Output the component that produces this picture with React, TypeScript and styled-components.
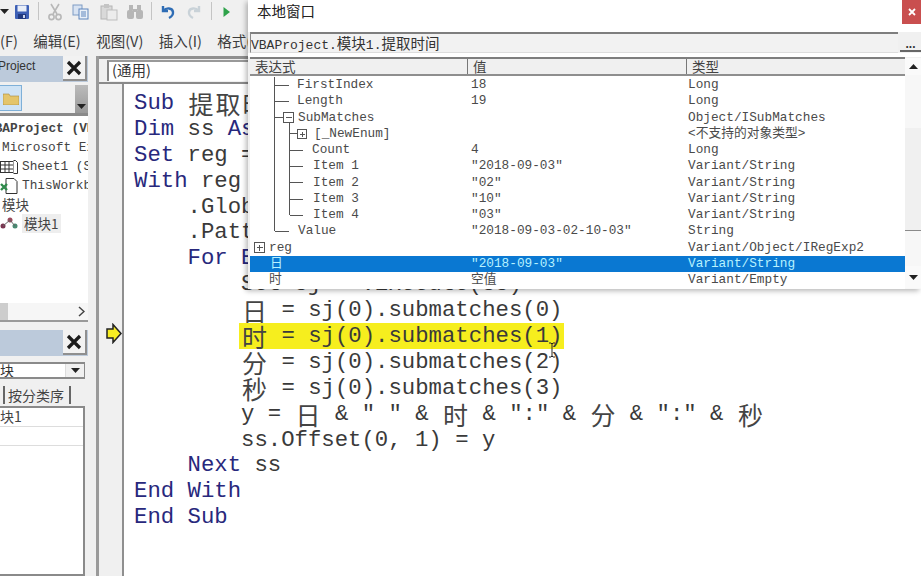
import React from "react";
import styled, { createGlobalStyle } from "styled-components";

const Global = createGlobalStyle`
  html, body { margin: 0; padding: 0; background: #f0f0f0; }
  body { width: 921px; height: 576px; overflow: hidden; }
  svg { flex: none; }
`;
const CJK = `"Noto Sans CJK SC", sans-serif`;
const MONO = `"Liberation Mono", "Noto Sans CJK SC", monospace`;

const Screen = styled.div`
  position: relative; width: 921px; height: 576px; overflow: hidden;
  background: #f0f0f0; display: flex; flex-direction: column; color: #333;
`;
const Toolbar = styled.div`
  height: 30px; flex: none; display: flex; align-items: flex-start; box-sizing: border-box;
`;
const Tool = styled.div<{ $w?: number }>`
  width: ${p => p.$w ?? 26}px; height: 23px; flex: none; display: flex; align-items: center; justify-content: center;
`;
const Sep = styled.div<{ $l: number; $r: number }>`
  width: 1px; height: 18px; margin: 2px ${p => p.$r}px 0 ${p => p.$l}px; background: #c4c4c4; flex: none;
`;
const MenuBar = styled.div`
  height: 26px; flex: none; display: flex; align-items: center; gap: 15.5px;
  font: 14.5px/26px ${CJK}; color: #3c3c3c; margin-left: -29px; white-space: nowrap; margin-top: -2px;
`;
const Workspace = styled.div`
  flex: 1; min-height: 0; display: flex; margin-top: 2px;
`;
const LeftDock = styled.div`
  width: 96px; flex: none; display: flex; flex-direction: column; overflow: hidden;
`;
const PaneTitle = styled.div`
  height: 26px; flex: none; width: 88px; display: flex; justify-content: space-between; background: #bccadb;
  font: 12px/20px "Liberation Sans", sans-serif; color: #333; box-sizing: border-box; padding-right: 1px;
`;
const Close = styled.div`
  width: 24px; height: 25px; background: #f2f2f2; border-right: 2px solid #8f8f8f; border-bottom: 2px solid #8f8f8f; box-sizing: border-box;
  display: flex; align-items: center; justify-content: center;
`;
const PaneTitleText = styled.span` margin-left: -2px; `;
const ProjTools = styled.div`
  height: 34px; flex: none; width: 88px; display: flex; justify-content: space-between; box-sizing: border-box; padding-top: 3px;
  border-bottom: 3px solid #8a8a8a;
`;
const FolderBtn = styled.div`
  width: 22px; height: 26px; background: #cfe3f5; border: 1px solid #7fb0d8; border-left: 0; box-sizing: border-box;
  display: flex; align-items: center; justify-content: center;
`;
const Grip = styled.div`
  width: 13px; height: 28px; background: linear-gradient(#bbb, #999); display: flex; flex-direction: column; align-items: center; justify-content: flex-end; padding-bottom: 4px; box-sizing: border-box;
`;
const Tree = styled.div`
  height: 187px; flex: none; width: 88px; overflow: hidden; background: #fff; padding-top: 3px; box-sizing: border-box;
  font: 12.8px/19px ${MONO}; color: #444; white-space: nowrap;
`;
const TreeRow = styled.div<{ $ml: number; $bold?: boolean }>`
  height: 19px; margin-left: ${p => p.$ml}px; display: flex; align-items: center; gap: 4px; width: max-content;
  font-weight: ${p => (p.$bold ? 700 : 400)};
`;
const TreeSel = styled.span`
  background: #eee; font: 13.5px/19px ${CJK}; padding: 0 2px;
`;
const TreeCjk = styled.span` font: 13.5px/19px ${CJK}; `;
const HScroll = styled.div`
  height: 17px; width: 88px; flex: none; background: #f6f6f6; display: flex; align-items: center; justify-content: space-between;
  border-bottom: 2px solid #9a9a9a;
`;
const HThumb = styled.div` width: 8px; height: 17px; background: #cdcdcd; `;
const HArrow = styled.div` width: 14px; display: flex; justify-content: center; `;
const PropsPane = styled.div`
  margin-top: 8px; flex: 1; width: 88px; display: flex; flex-direction: column;
`;
const Combo = styled.div`
  margin-top: 6px; height: 17px; width: 85px; background: #fff; box-sizing: border-box; border: 2px solid #8a8a8a; border-left: 0; border-right-width: 1px;
  display: flex; justify-content: space-between; font: 14px/13px ${CJK}; color: #333; flex: none; overflow: hidden;
`;
const ComboClip = styled.span` margin-left: -14px; `;
const ComboBtn = styled.div`
  width: 18px; background: #f0f0f0; display: flex; align-items: center; justify-content: center; border-left: 1px solid #ddd;
`;
const Tabs = styled.div`
  margin: 7px 0 0 3px; height: 18px; flex: none; font: 14px/18px ${CJK}; color: #444; white-space: nowrap; width: 68px; box-sizing: border-box; border-left: 2px solid #666; border-right: 2px solid #666; padding-left: 3px;
`;
const Grid = styled.div`
  margin-top: 2px; flex: 1; width: 85px; background: #fff; border: 2px solid #8a8a8a; border-left: 0; box-sizing: border-box; font: 14px/17px ${CJK}; color: #444; overflow: hidden;
`;
const GridRow = styled.div`
  height: 18px; border-bottom: 1px solid #ddd; margin-left: -14px;
`;

const CodeWindow = styled.div`
  flex: 1; min-width: 0; display: flex; flex-direction: column; border-left: 3px solid #9a9a9a;
`;
const CodeHeader = styled.div`
  height: 26px; flex: none; box-sizing: border-box; border-top: 3px solid #8f8f8f; padding: 1px 0 0 8px; background: #f0f0f0;
`;
const CodeCombo = styled.div`
  height: 21px; width: 160px; background: #fff; border-left: 2px solid #888; border-top: 2px solid #999; box-sizing: border-box;
  font: 14.5px/16px ${CJK}; color: #333; padding-left: 3px;
`;
const CodeBody = styled.div`
  flex: 1; min-height: 0; display: flex; border-top: 2px solid #8a8a8a;
`;
const Margin = styled.div`
  flex: none; background: #f0f0f0; border-right: 2px solid #8f8f8f; padding: 239px 0 0 7px; box-sizing: border-box; width: 25px;
`;
const Code = styled.div`
  flex: 1; background: #fff; padding: 6px 0 0 10px; font: 22.3px/26px "Liberation Mono", monospace; color: #3a3a3a; white-space: pre; overflow: hidden;
`;
const Line = styled.div`
  height: 25.9px;
`;
const Hl = styled.span`
  display: inline-block; background: #f6ee1e; margin-left: -2px; padding: 0 2px; height: 26px;
`;
const Kw = styled.span` color: #28287c; `;
const Han = styled.span`
  display: inline-block; width: 27px; text-align: center; font: 25px/26px ${CJK}; vertical-align: top; color: #444;
`;

const Locals = styled.div`
  position: absolute; left: 248px; top: 0; width: 673px; height: 289px; background: #fff; display: flex; flex-direction: column;
  box-shadow: -2px 2px 5px rgba(0,0,0,.28);
`;
const LTitle = styled.div`
  height: 32px; flex: none; display: flex; justify-content: space-between; background: #fff; font: 14.5px/22px ${CJK}; color: #222; padding-left: 9px;
`;
const Red = styled.div`
  width: 19px; height: 24px; background: #c94f4f; display: flex; align-items: center; justify-content: center;
`;
const LContext = styled.div`
  height: 21px; flex: none; display: flex; background: #f0f0f0;
`;
const ContextBox = styled.div`
  flex: 1; border-top: 2px solid #7e7e7e; border-left: 1px solid #888; border-bottom: 1px solid #ddd; box-sizing: border-box;
  font: 13px/18px ${MONO}; color: #333; padding-left: 0; background: #f2f2f2; white-space: nowrap; margin-left: 2px;
`;
const CtxHan = styled.span` font: 14.5px/18px ${CJK}; `;
const Dots = styled.div`
  width: 21px; margin-left: 2px; margin-top: 1px; background: #f0f0f0; border-bottom: 2px solid #666; box-sizing: border-box; text-align: center; font: 700 12px/22px "Liberation Sans", sans-serif; color: #333; height: 19px; overflow: hidden;
`;
const LBody = styled.div`
  flex: 1; min-height: 0; display: flex; margin-top: 4px; background: #f0f0f0; padding-left: 2px;
`;
const Table = styled.div` flex: 1; min-width: 0; display: flex; flex-direction: column; `;
const Head = styled.div`
  flex: none; display: grid; grid-template-columns: 218px 219px 1fr; background: #f0f0f0; border-top: 2px solid #7e7e7e; border-bottom: 2px solid #8e8e8e; height: 15px;
  font: 13.5px/15px ${CJK}; color: #444;
`;
const HeadCell = styled.div` padding-left: 5px; border-right: 1px solid #777; &:last-child { border-right: 0; } `;
const Rows = styled.div` flex: 1; min-height: 0; background: #fff; overflow: hidden; padding-top: 1px; `;
const Row = styled.div<{ $sel?: boolean }>`
  height: 16.27px; display: grid; grid-template-columns: 218px 219px 1fr; white-space: nowrap;
  font: 12.75px/16.27px ${MONO};
  background: ${p => (p.$sel ? "#0a78d2" : "transparent")};
  color: ${p => (p.$sel ? "#b8f2ff" : "#4a4a4a")};
`;
const Name = styled.div` display: flex; align-items: center; height: 16.27px; overflow: hidden; `;
const Val = styled.div` padding-left: 3px; `;
const Typ = styled.div` padding-left: 1px; `;
const LScroll = styled.div`
  width: 16px; flex: none; display: flex; flex-direction: column; background: #f7f7f7; margin-top: 1px;
`;
const SBtn = styled.div<{ $h: number }>`
  height: ${p => p.$h}px; flex: none; background: #fafafa; display: flex; align-items: center; justify-content: center;
`;
const STrack = styled.div<{ $h: number }>` height: ${p => p.$h}px; flex: none; background: #f7f7f7; `;
const SThumb = styled.div<{ $h: number }>` height: ${p => p.$h}px; flex: none; background: #f0f0f0; border-bottom: 1px solid #8a8a8a; box-sizing: border-box; `;
const Cursor = styled.svg` position: absolute; left: 548px; top: 342px; `;

const Guide = ({ w, v1, v2, elbow1, elbow2, h1, h2, box }: any) => (
  <svg width={w} height="17" viewBox={`0 0 ${w} 17`}>
    <g stroke="#555" strokeWidth="1" fill="none" shapeRendering="crispEdges">
      {v1 && <path d={elbow1 ? "M24.5 0V8" : "M24.5 0V17"} />}
      {v2 && <path d={elbow2 ? "M39.5 0V8" : "M39.5 0V17"} />}
      {h1 && <path d="M24.5 8.5H39" />}
      {h2 && <path d="M39.5 8.5H53" />}
      {box === "minus1" && <><path d="M24.5 8.5H33" /><path d="M39.5 14V17" /><rect x="33.5" y="3.5" width="10" height="10" fill="#fff" /><path d="M36 8.5H41.5" /></>}
      {box === "plus2" && <><path d="M39.5 8.5H47" /><rect x="47.5" y="4.5" width="9" height="9" fill="#fff" /><path d="M49.5 9H54.5M52 6.5V11.5" /></>}
      {box === "plus0" && <><rect x="4.5" y="3.5" width="10" height="10" fill="#fff" /><path d="M6.5 8.5H12.5M9.5 5.5V11.5" /></>}
    </g>
  </svg>
);

const Ic = {
  Save: () => <svg width="16" height="16" viewBox="0 0 16 16"><rect x="1" y="1" width="14" height="14" rx="1" fill="#3d5fb5" /><rect x="3.5" y="1.5" width="9" height="6" fill="#e8eef8" /><rect x="4" y="10" width="8" height="5" fill="#223a80" /><rect x="9" y="11" width="2" height="3" fill="#cfd8ef" /></svg>,
  Cut: () => <svg width="16" height="18" viewBox="0 0 16 18" fill="none" stroke="#b8b8b8" strokeWidth="1.6"><path d="M4 1l6 10M12 1L6 11" /><circle cx="4.5" cy="14" r="2.6" /><circle cx="11.5" cy="14" r="2.6" /></svg>,
  Copy: () => <svg width="18" height="16" viewBox="0 0 18 16"><rect x="1" y="1" width="9" height="10" fill="#d8e3f2" stroke="#7f9cc4" /><rect x="7" y="5" width="9" height="10" fill="#eaf0f8" stroke="#5f86bd" /><path d="M9 8h5M9 10h5M9 12h5" stroke="#5f86bd" /></svg>,
  Paste: () => <svg width="18" height="18" viewBox="0 0 18 18"><rect x="1" y="3" width="11" height="13" fill="#d9d9d9" stroke="#b4b4b4" /><rect x="4" y="1" width="5" height="4" fill="#c4c4c4" /><rect x="7" y="7" width="10" height="10" fill="#ececec" stroke="#bdbdbd" /></svg>,
  Find: () => <svg width="18" height="16" viewBox="0 0 18 16" fill="#b6b6b6"><rect x="3" y="1" width="4" height="5" /><rect x="11" y="1" width="4" height="5" /><rect x="7" y="5" width="4" height="3" /><rect x="1" y="6" width="7" height="9" rx="2" /><rect x="10" y="6" width="7" height="9" rx="2" /></svg>,
  Undo: () => <svg width="16" height="16" viewBox="0 0 16 16" fill="none" stroke="#2f6db5" strokeWidth="2.4"><path d="M3 2v5h5" /><path d="M3.5 6.5C6 3.5 12.5 3.5 13 8c.3 3-2 5-4 6" /></svg>,
  Redo: () => <svg width="16" height="16" viewBox="0 0 16 16" fill="none" stroke="#c9d2d8" strokeWidth="2.4"><path d="M13 2v5H8" /><path d="M12.5 6.5C10 3.5 3.5 3.5 3 8c-.3 3 2 5 4 6" /></svg>,
  Run: () => <svg width="10" height="14" viewBox="0 0 10 14"><path d="M1.5 2L8 7 1.5 12z" fill="#2ea24a" /></svg>,
  X: () => <svg width="16" height="16" viewBox="0 0 16 16" stroke="#1c1c1c" strokeWidth="3.2"><path d="M2 2l12 12M14 2L2 14" /></svg>,
  Down: () => <svg width="9" height="5" viewBox="0 0 9 5"><path d="M0 0h9L4.5 5z" fill="#222" /></svg>,
  Up: () => <svg width="9" height="5" viewBox="0 0 9 5"><path d="M0 5h9L4.5 0z" fill="#222" /></svg>,
  Folder: () => <svg width="16" height="13" viewBox="0 0 16 13"><path d="M0 2h6l1 2h9v9H0z" fill="#e4c56b" stroke="#a98b3c" strokeWidth=".6" /></svg>,
  Right: () => <svg width="7" height="11" viewBox="0 0 7 11" fill="none" stroke="#444" strokeWidth="1.5"><path d="M1 1l5 4.5L1 10" /></svg>,
  Sheet: () => <svg width="18" height="16" viewBox="0 0 18 16" fill="#fff" stroke="#333"><rect x="0.5" y="2.5" width="13" height="11" /><path d="M0.5 6H13.5M0.5 10H13.5M5 2.5V13.5M9 2.5V13.5" /><path d="M13.5 1.5h2l2 2v11h-4" /></svg>,
  Book: () => <svg width="18" height="18" viewBox="0 0 18 18"><path d="M6 1.5h8l3 3v12H6z" fill="#fff" stroke="#333" /><path d="M1 7l6 6M7 7l-6 6" stroke="#2f8a4b" strokeWidth="2.4" /></svg>,
  Module: () => <svg width="18" height="15" viewBox="0 0 18 15"><circle cx="3" cy="10" r="2.5" fill="#7a3550" /><circle cx="10" cy="4" r="2.5" fill="#9a4a5c" /><circle cx="15" cy="10" r="2.5" fill="#4a8a72" /><path d="M3 10L10 4L15 10" stroke="#666" fill="none" /></svg>,
  Arrow: () => <svg width="16" height="21" viewBox="0 0 16 21"><path d="M1 6h6V1.5l8 9-8 9V15H1z" fill="#f8ee22" stroke="#222" strokeWidth="1.5" /></svg>,
};

type R = { n: string; v?: string; t?: string; g: any; sel?: boolean };
const rows: R[] = [
  { n: "FirstIndex", v: "18", t: "Long", g: { w: 47, v1: 1, h1: 1 } },
  { n: "Length", v: "19", t: "Long", g: { w: 47, v1: 1, h1: 1 } },
  { n: "SubMatches", t: "Object/ISubMatches", g: { w: 48, v1: 1, box: "minus1" } },
  { n: "[_NewEnum]", t: "<不支持的对象类型>", g: { w: 64, v1: 1, v2: 1, box: "plus2" } },
  { n: "Count", v: "4", t: "Long", g: { w: 62, v1: 1, v2: 1, h2: 1 } },
  { n: "Item 1", v: "″2018-09-03″", t: "Variant/String", g: { w: 63, v1: 1, v2: 1, h2: 1 } },
  { n: "Item 2", v: "″02″", t: "Variant/String", g: { w: 63, v1: 1, v2: 1, h2: 1 } },
  { n: "Item 3", v: "″10″", t: "Variant/String", g: { w: 63, v1: 1, v2: 1, h2: 1 } },
  { n: "Item 4", v: "″03″", t: "Variant/String", g: { w: 63, v1: 1, v2: 1, elbow2: 1, h2: 1 } },
  { n: "Value", v: "″2018-09-03-02-10-03″", t: "String", g: { w: 48, v1: 1, elbow1: 1, h1: 1 } },
  { n: "reg", t: "Variant/Object/IRegExp2", g: { w: 19, box: "plus0" } },
  { n: "日", v: "″2018-09-03″", t: "Variant/String", g: { w: 20 }, sel: true },
  { n: "时", v: "空值", t: "Variant/Empty", g: { w: 19 } },
];

export default function App() {
  return (
    <Screen>
      <Global />
      <Toolbar>
        <Tool $w={9}><Ic.Down /></Tool>
        <Tool $w={26}><Ic.Save /></Tool>
        <Sep $l={3} $r={7} />
        <Tool $w={18}><Ic.Cut /></Tool>
        <Tool $w={34}><Ic.Copy /></Tool>
        <Tool $w={22}><Ic.Paste /></Tool>
        <Tool $w={30}><Ic.Find /></Tool>
        <Sep $l={1} $r={8} />
        <Tool $w={16}><Ic.Undo /></Tool>
        <Tool $w={35}><Ic.Redo /></Tool>
        <Sep $l={0} $r={8} />
        <Tool $w={14}><Ic.Run /></Tool>
      </Toolbar>
      <MenuBar>
        <span>文件(F)</span>
        <span>编辑(E)</span>
        <span>视图(V)</span>
        <span>插入(I)</span>
        <span>格式(O)</span>
      </MenuBar>
      <Workspace>
        <LeftDock>
          <PaneTitle>
            <PaneTitleText>Project</PaneTitleText>
            <Close><Ic.X /></Close>
          </PaneTitle>
          <ProjTools>
            <FolderBtn><Ic.Folder /></FolderBtn>
            <Grip><Ic.Down /></Grip>
          </ProjTools>
          <Tree>
            <TreeRow $ml={-13} $bold>VBAProject (VBAProject)</TreeRow>
            <TreeRow $ml={2}>Microsoft Excel</TreeRow>
            <TreeRow $ml={0}><Ic.Sheet />Sheet1 (Sheet1)</TreeRow>
            <TreeRow $ml={0}><Ic.Book />ThisWorkbook</TreeRow>
            <TreeRow $ml={2}><TreeCjk>模块</TreeCjk></TreeRow>
            <TreeRow $ml={0}><Ic.Module /><TreeSel>模块1</TreeSel></TreeRow>
          </Tree>
          <HScroll><HThumb /><HArrow><Ic.Right /></HArrow></HScroll>
          <PropsPane>
            <PaneTitle><span /><Close><Ic.X /></Close></PaneTitle>
            <Combo><ComboClip>模块</ComboClip><ComboBtn><Ic.Down /></ComboBtn></Combo>
            <Tabs>按分类序</Tabs>
            <Grid><GridRow>模块1</GridRow><GridRow /></Grid>
          </PropsPane>
        </LeftDock>
        <CodeWindow>
          <CodeHeader><CodeCombo>(通用)</CodeCombo></CodeHeader>
          <CodeBody>
            <Margin><Ic.Arrow /></Margin>
            <Code>
              <Line><Kw>Sub</Kw> <Han>提</Han><Han>取</Han><Han>时</Han><Han>间</Han>()</Line>
              <Line><Kw>Dim</Kw> ss <Kw>As</Kw> Range</Line>
              <Line><Kw>Set</Kw> reg = CreateObject</Line>
              <Line><Kw>With</Kw> reg</Line>
              <Line>    .Global = True</Line>
              <Line>    .Pattern = ""</Line>
              <Line>    <Kw>For Each</Kw> ss In Selection</Line>
              <Line>        Set sj = .Execute(ss)</Line>
              <Line>        <Han>日</Han> = sj(0).submatches(0)</Line>
              <Line>        <Hl><Han>时</Han> = sj(0).submatches(1)</Hl></Line>
              <Line>        <Han>分</Han> = sj(0).submatches(2)</Line>
              <Line>        <Han>秒</Han> = sj(0).submatches(3)</Line>
              <Line>        y = <Han>日</Han> &amp; ″ ″ &amp; <Han>时</Han> &amp; ″:″ &amp; <Han>分</Han> &amp; ″:″ &amp; <Han>秒</Han></Line>
              <Line>        ss.Offset(0, 1) = y</Line>
              <Line>    <Kw>Next</Kw> ss</Line>
              <Line><Kw>End With</Kw></Line>
              <Line><Kw>End Sub</Kw></Line>
            </Code>
          </CodeBody>
        </CodeWindow>
      </Workspace>

      <Locals>
        <LTitle>本地窗口<Red><svg width="8" height="8" viewBox="0 0 8 8" stroke="#fff" strokeWidth="1.8"><path d="M1 1l6 6M7 1L1 7" /></svg></Red></LTitle>
        <LContext>
          <ContextBox>VBAProject.<CtxHan>模块</CtxHan>1.<CtxHan>提取时间</CtxHan></ContextBox>
          <Dots>...</Dots>
        </LContext>
        <LBody>
          <Table>
            <Head><HeadCell>表达式</HeadCell><HeadCell>值</HeadCell><HeadCell>类型</HeadCell></Head>
            <Rows>
              {rows.map(r => (
                <Row key={r.n} $sel={r.sel}>
                  <Name><Guide {...r.g} /><span>{r.n}</span></Name>
                  <Val>{r.v}</Val>
                  <Typ>{r.t}</Typ>
                </Row>
              ))}
            </Rows>
          </Table>
          <LScroll>
            <SBtn $h={17}><Ic.Up /></SBtn>
            <STrack $h={53} />
            <SThumb $h={103} />
            <STrack $h={35} />
            <SBtn $h={22}><Ic.Down /></SBtn>
          </LScroll>
        </LBody>
      </Locals>
      <Cursor width="8" height="16" viewBox="0 0 8 16" fill="none" stroke="#222"><path d="M1 1h2l1 1 1-1h2M4 2v12M1 15h2l1-1 1 1h2" /></Cursor>
    </Screen>
  );
}
